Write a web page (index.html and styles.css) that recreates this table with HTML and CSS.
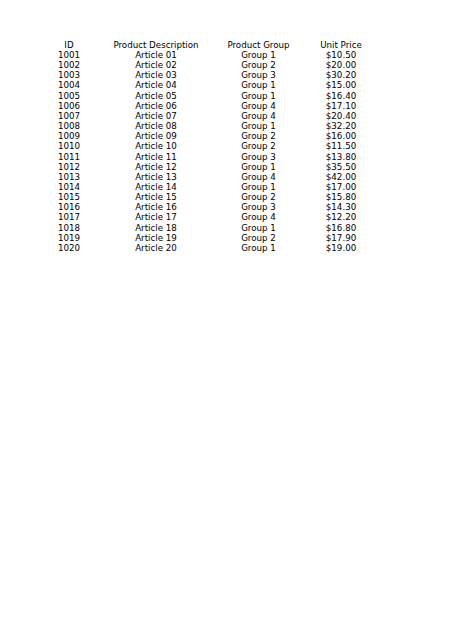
FILE: index.html
```html
<!DOCTYPE html>
<html>
<head>
<meta charset="utf-8">
<link rel="stylesheet" href="styles.css">
</head>
<body>
<div class="sheet">
  <div class="row"><div>ID</div><div>Product Description</div><div>Product Group</div><div>Unit Price</div></div>
  <div class="row"><div>1001</div><div>Article 01</div><div>Group 1</div><div>$10.50</div></div>
  <div class="row"><div>1002</div><div>Article 02</div><div>Group 2</div><div>$20.00</div></div>
  <div class="row"><div>1003</div><div>Article 03</div><div>Group 3</div><div>$30.20</div></div>
  <div class="row"><div>1004</div><div>Article 04</div><div>Group 1</div><div>$15.00</div></div>
  <div class="row"><div>1005</div><div>Article 05</div><div>Group 1</div><div>$16.40</div></div>
  <div class="row"><div>1006</div><div>Article 06</div><div>Group 4</div><div>$17.10</div></div>
  <div class="row"><div>1007</div><div>Article 07</div><div>Group 4</div><div>$20.40</div></div>
  <div class="row"><div>1008</div><div>Article 08</div><div>Group 1</div><div>$32.20</div></div>
  <div class="row"><div>1009</div><div>Article 09</div><div>Group 2</div><div>$16.00</div></div>
  <div class="row"><div>1010</div><div>Article 10</div><div>Group 2</div><div>$11.50</div></div>
  <div class="row"><div>1011</div><div>Article 11</div><div>Group 3</div><div>$13.80</div></div>
  <div class="row"><div>1012</div><div>Article 12</div><div>Group 1</div><div>$35.50</div></div>
  <div class="row"><div>1013</div><div>Article 13</div><div>Group 4</div><div>$42.00</div></div>
  <div class="row"><div>1014</div><div>Article 14</div><div>Group 1</div><div>$17.00</div></div>
  <div class="row"><div>1015</div><div>Article 15</div><div>Group 2</div><div>$15.80</div></div>
  <div class="row"><div>1016</div><div>Article 16</div><div>Group 3</div><div>$14.30</div></div>
  <div class="row"><div>1017</div><div>Article 17</div><div>Group 4</div><div>$12.20</div></div>
  <div class="row"><div>1018</div><div>Article 18</div><div>Group 1</div><div>$16.80</div></div>
  <div class="row"><div>1019</div><div>Article 19</div><div>Group 2</div><div>$17.90</div></div>
  <div class="row"><div>1020</div><div>Article 20</div><div>Group 1</div><div>$19.00</div></div>
</div>
</body>
</html>
```
FILE: styles.css
```css
html, body {
  margin: 0;
  padding: 0;
  background: #ffffff;
}
.sheet {
  padding-top: 39.8px;
  padding-left: 38px;
  font-family: "DejaVu Sans", sans-serif;
  font-size: 8.7px;
  line-height: 10.15px;
  color: #000000;
}
.row {
  display: grid;
  grid-template-columns: 62px 112px 93px 72px;
  text-align: center;
  white-space: nowrap;
}
```
